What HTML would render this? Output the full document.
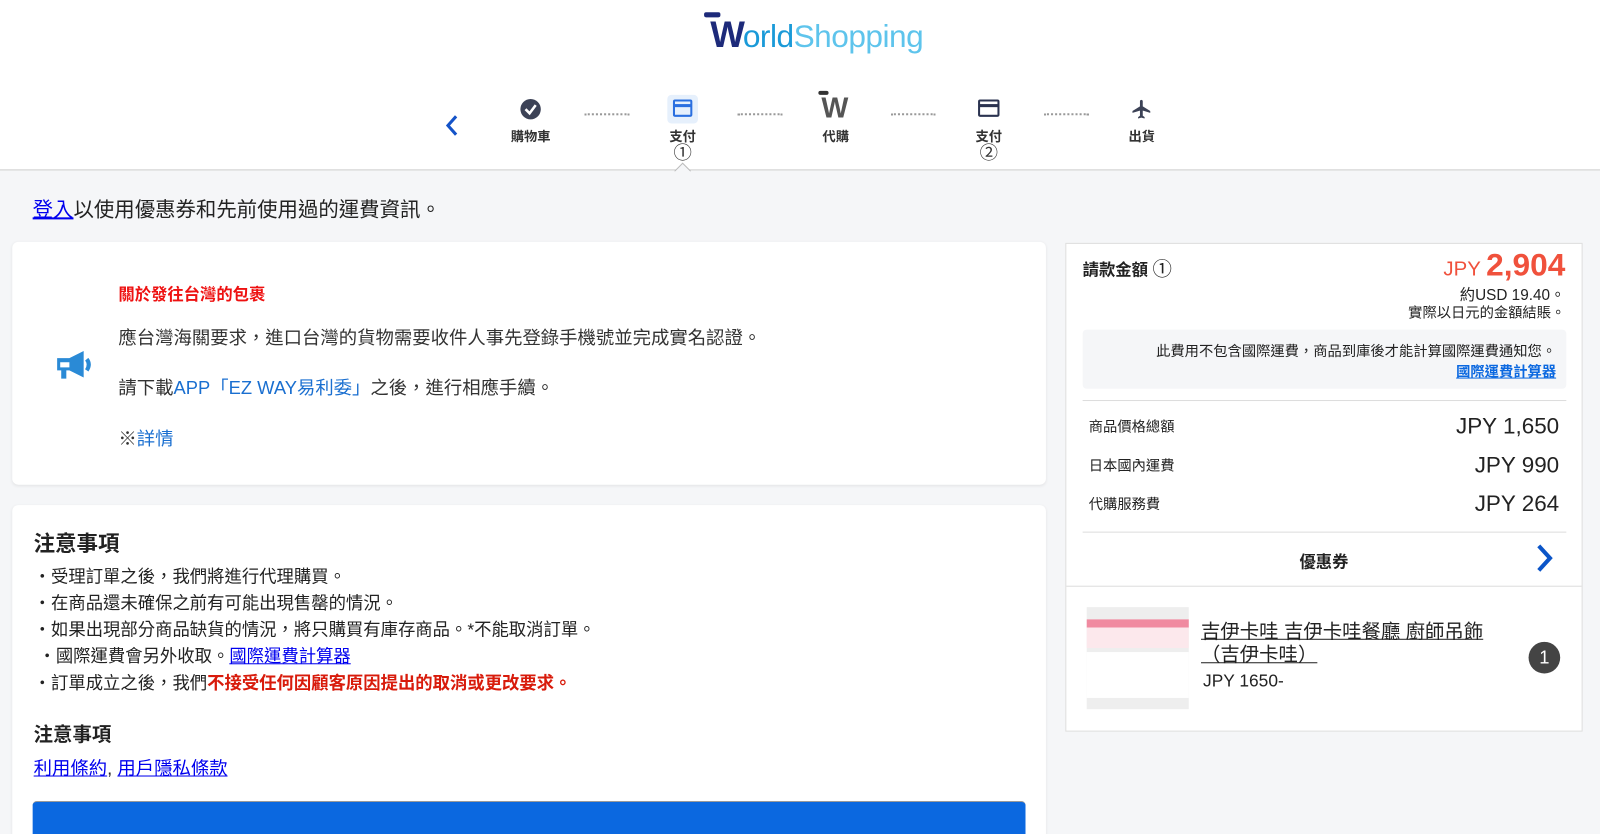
<!DOCTYPE html>
<html><head><meta charset="utf-8"><style>
*{box-sizing:border-box;margin:0;padding:0}
html,body{width:1600px;height:834px;overflow:hidden;background:#f5f6f8}
body{font-family:"Liberation Sans","Noto Sans CJK TC",sans-serif;color:#222;position:relative}
#w{position:absolute;left:0;top:0;width:1568px;height:820px;transform:scale(1.0204);transform-origin:0 0}
.a{position:absolute}
header{position:absolute;left:0;top:0;width:1568px;height:167px;background:#fff;border-bottom:1px solid #ccc}
.step{position:absolute;text-align:center;font-size:13px;font-weight:bold;color:#333;width:60px}
.dots{position:absolute;top:111px;width:44px;border-top:2px dotted #999}
.card{position:absolute;background:#fff;border-radius:6px;box-shadow:0 1px 3px rgba(0,0,0,.08)}
a{color:#0000ee}
.lnk{color:#1a6fd0}
.row{position:absolute;left:22px;right:22px;font-size:14px;display:flex;justify-content:space-between;align-items:center}
.row b{font-size:22px;font-weight:normal}
</style></head><body><div id="w">
<header>
 <div class="a" style="left:690px;top:12px;width:16px;height:5px;background:#1d2a7a;border-radius:2px"></div>
 <div class="a" style="left:696px;top:13px;font-size:36px;font-weight:bold;color:#1d2a7a;letter-spacing:-1px">W</div>
 <div class="a" style="left:728px;top:18px;font-size:31px;color:#1a9ad8;letter-spacing:-.5px">orld<span style="color:#5ec4ec">Shopping</span></div>
 <svg class="a" style="left:434px;top:111px" width="18" height="24"><path d="M13 3 L5 12 L13 21" stroke="#1453c8" stroke-width="3" fill="none"/></svg>
 <div class="step" style="left:490px;top:96px"><svg width="22" height="22"><circle cx="11" cy="11" r="10" fill="#3c4256"/><path d="M6 11 L10 15 L16 7" stroke="#fff" stroke-width="2.5" fill="none"/></svg><div style="margin-top:2px">購物車</div></div>
 <div class="dots" style="left:573px"></div>
 <div class="a" style="left:654px;top:93px;width:30px;height:28px;background:#e6f0fc;border-radius:4px"></div>
 <svg class="a" style="left:659px;top:97px" width="20" height="18"><rect x="1.5" y="1.5" width="17" height="15" rx="1" fill="none" stroke="#2a6fe0" stroke-width="2"/><rect x="1" y="5" width="18" height="3" fill="#2a6fe0"/></svg>
 <div class="step" style="left:639px;top:123px">支付<div style="font-size:18px;font-weight:normal;line-height:16px">①</div></div>
 <svg class="a" style="left:661px;top:159px" width="16" height="9"><path d="M0 9 L8 1 L16 9" fill="#f5f6f8" stroke="#bbb"/></svg>
 <div class="dots" style="left:723px"></div>
 <div class="a" style="left:802px;top:89px;width:10px;height:4px;background:#333;border-radius:2px"></div>
 <div class="a" style="left:805px;top:90px;font-size:28px;font-weight:bold;color:#555">W</div>
 <div class="step" style="left:789px;top:123px">代購</div>
 <div class="dots" style="left:873px"></div>
 <svg class="a" style="left:958px;top:97px" width="22" height="18"><rect x="1.5" y="1.5" width="19" height="15" rx="1" fill="none" stroke="#2b3350" stroke-width="2"/><rect x="1" y="5" width="20" height="3" fill="#2b3350"/></svg>
 <div class="step" style="left:939px;top:123px">支付<div style="font-size:18px;font-weight:normal;line-height:16px">②</div></div>
 <div class="dots" style="left:1023px"></div>
 <svg class="a" style="left:1108px;top:96px" width="22" height="22" viewBox="0 0 24 24"><path fill="#3c4256" d="M21 16v-2l-8-5V3.5c0-.83-.67-1.5-1.5-1.5S10 2.67 10 3.5V9l-8 5v2l8-2.5V19l-2 1.5V22l3.5-1 3.5 1v-1.5L13 19v-5.5l8 2.5z"/></svg>
 <div class="step" style="left:1089px;top:123px">出貨</div>
</header>
<div class="a" style="left:32px;top:189px;font-size:20px"><a href="#">登入</a>以使用優惠券和先前使用過的運費資訊。</div>

<div class="card" style="left:12px;top:237px;width:1013px;height:238px">
 <svg class="a" style="left:42px;top:106px" width="38" height="30" viewBox="0 0 38 30"><path fill="#2a8ad6" d="M2 8h12l14-7v26l-14-7h-3v8h-5v-8h-4z"/><path d="M5 12h9v5H5z" fill="#fff"/><path d="M31 9q4 5 0 11" stroke="#2a8ad6" stroke-width="4" fill="none"/></svg>
 <div class="a" style="left:104px;top:38px;font-size:16px;font-weight:bold;color:#ee1111">關於發往台灣的包裹</div>
 <div class="a" style="left:104px;top:80px;font-size:18px;color:#333">應台灣海關要求，進口台灣的貨物需要收件人事先登錄手機號並完成實名認證。</div>
 <div class="a" style="left:104px;top:129px;font-size:18px;color:#333">請下載<span class="lnk">APP「EZ WAY易利委」</span>之後，進行相應手續。</div>
 <div class="a" style="left:104px;top:179px;font-size:18px;color:#333">※<span class="lnk">詳情</span></div>
</div>

<div class="card" style="left:12px;top:495px;width:1013px;height:360px">
 <div class="a" style="left:21px;top:22px;font-size:21px;font-weight:bold">注意事項</div>
 <div class="a" style="left:21px;top:58px;font-size:17px;line-height:26px">
 ・受理訂單之後，我們將進行代理購買。<br>・在商品還未確保之前有可能出現售罄的情況。<br>・如果出現部分商品缺貨的情況，將只購買有庫存商品。*不能取消訂單。<br>&nbsp;・國際運費會另外收取。<a href="#">國際運費計算器</a><br>・訂單成立之後，我們<b style="color:#d81b0b">不接受任何因顧客原因提出的取消或更改要求。</b></div>
 <div class="a" style="left:21px;top:210px;font-size:19px;font-weight:bold">注意事項</div>
 <div class="a" style="left:21px;top:244px;font-size:18px"><a href="#">利用條約</a>, <a href="#">用戶隱私條款</a></div>
 <div class="a" style="left:20px;top:290px;width:973px;height:60px;background:#0b68e0;border-radius:4px;border-top:1px solid #999"></div>
</div>

<div class="a" style="left:1044px;top:238px;width:507px;height:479px;background:#fff;border:1px solid #ddd">
 <div class="a" style="left:16px;top:10px;font-size:16px;font-weight:bold">請款金額 <span style="font-weight:normal;font-size:19px">①</span></div>
 <div class="a" style="right:16px;top:3px;color:#f0513c;font-size:20px">JPY <b style="font-size:31px">2,904</b></div>
 <div class="a" style="right:16px;top:43px;font-size:15px;text-align:right;line-height:16px">約USD 19.40。<br><span style="font-size:14px">實際以日元的金額結賬。</span></div>
 <div class="a" style="left:16px;top:84px;width:474px;height:58px;background:#f5f6f8;border-radius:4px;text-align:right;padding:11px 10px;font-size:14px;line-height:20px">此費用不包含國際運費，商品到庫後才能計算國際運費通知您。<br><a href="#" style="color:#0b68e0;font-weight:bold">國際運費計算器</a></div>
 <div class="a" style="left:16px;top:153px;width:474px;border-top:1px solid #ddd"></div>
 <div class="row" style="top:166px">商品價格總額<b>JPY 1,650</b></div>
 <div class="row" style="top:204px">日本國內運費<b>JPY 990</b></div>
 <div class="row" style="top:242px">代購服務費<b>JPY 264</b></div>
 <div class="a" style="left:16px;top:282px;width:474px;border-top:1px solid #ddd"></div>
 <div class="a" style="left:0;width:505px;top:298px;text-align:center;font-size:16px;font-weight:bold">優惠券</div>
 <svg class="a" style="left:458px;top:293px" width="22" height="30"><path d="M5 3 L16 15 L5 27" stroke="#0b55c8" stroke-width="4" fill="none"/></svg>
 <div class="a" style="left:0;top:335px;width:505px;border-top:1px solid #ddd"></div>
 <div class="a" style="left:20px;top:356px;width:100px;height:100px;background:#eee"><div style="margin-top:12px;height:8px;background:#f08aa0"></div><div style="height:20px;background:#fce8ec"></div><div style="height:45px;background:#fff;margin-top:4px"></div></div>
 <div class="a" style="left:132px;top:369px;font-size:19px;line-height:23px;text-decoration:underline;width:310px">吉伊卡哇 吉伊卡哇餐廳 廚師吊飾（吉伊卡哇）</div>
 <div class="a" style="left:134px;top:419px;font-size:17px">JPY 1650-</div>
 <div class="a" style="left:453px;top:390px;width:31px;height:31px;border-radius:50%;background:#444;color:#fff;font-size:18px;text-align:center;line-height:31px">1</div>
</div>
</div></body></html>
